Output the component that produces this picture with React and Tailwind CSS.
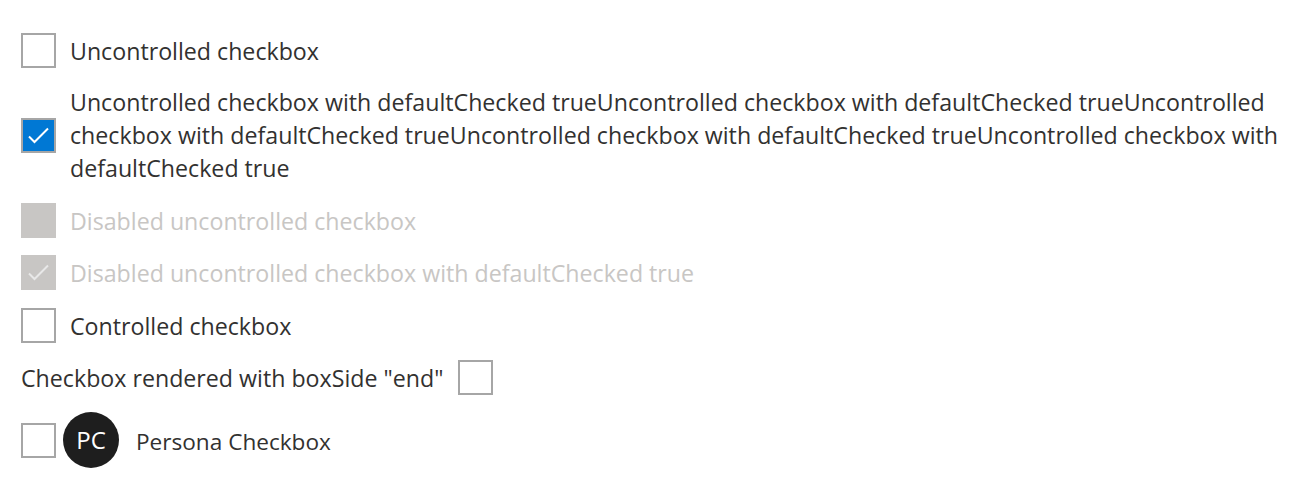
import React from "react";

function Check({ color }) {
  return (
    <svg viewBox="0 0 31 31" className="w-[31px] h-[31px]" fill="none">
      <path d="M6 16.5 L11.5 22 L25 8.5" stroke={color} strokeWidth="2" />
    </svg>
  );
}

function Box({ state = "unchecked" }) {
  if (state === "checked")
    return (
      <div className="w-[35px] h-[35px] shrink-0 border-2 border-[#a6a6a6] bg-[#0078d4] flex items-center justify-center">
        <Check color="#ffffff" />
      </div>
    );
  if (state === "disabled")
    return <div className="w-[35px] h-[35px] shrink-0 bg-[#c8c6c4]" />;
  if (state === "disabledChecked")
    return (
      <div className="w-[35px] h-[35px] shrink-0 bg-[#c8c6c4] flex items-center justify-center">
        <Check color="#e8e8e8" />
      </div>
    );
  return <div className="w-[35px] h-[35px] shrink-0 border-2 border-[#a6a6a6] bg-white" />;
}

const longText =
  "Uncontrolled checkbox with defaultChecked trueUncontrolled checkbox with defaultChecked trueUncontrolled checkbox with defaultChecked trueUncontrolled checkbox with defaultChecked trueUncontrolled checkbox with defaultChecked true";

export default function App() {
  return (
    <div className="min-h-screen bg-white px-[21px] pt-[33px] font-['Open_Sans',sans-serif] text-[23.2px] leading-[33px] text-[#323130]">
      <div className="flex flex-col gap-[17.4px]">
        <div className="flex items-center gap-[14px]">
          <Box />
          <span className="pt-[2px]">Uncontrolled checkbox</span>
        </div>
        <div className="flex items-center gap-[14px]">
          <Box state="checked" />
          <span className="pt-[1px]">{longText}</span>
        </div>
        <div className="flex items-center gap-[14px] text-[#c8c6c4]">
          <Box state="disabled" />
          <span className="pt-[2px]">Disabled uncontrolled checkbox</span>
        </div>
        <div className="flex items-center gap-[14px] text-[#c8c6c4]">
          <Box state="disabledChecked" />
          <span className="pt-[2px]">Disabled uncontrolled checkbox with defaultChecked true</span>
        </div>
        <div className="flex items-center gap-[14px]">
          <Box />
          <span className="pt-[2px]">Controlled checkbox</span>
        </div>
        <div className="flex items-center gap-[15px]">
          <span className="pt-[2px]">Checkbox rendered with boxSide "end"</span>
          <Box />
        </div>
        <div className="flex items-center">
          <Box />
          <div className="ml-[7px] w-[56px] h-[56px] rounded-full bg-[#1e1e1e] flex items-center justify-center text-white text-[24px] leading-none">
            PC
          </div>
          <span className="ml-[17px] pt-[2px] text-[22.6px]">Persona Checkbox</span>
        </div>
      </div>
    </div>
  );
}
